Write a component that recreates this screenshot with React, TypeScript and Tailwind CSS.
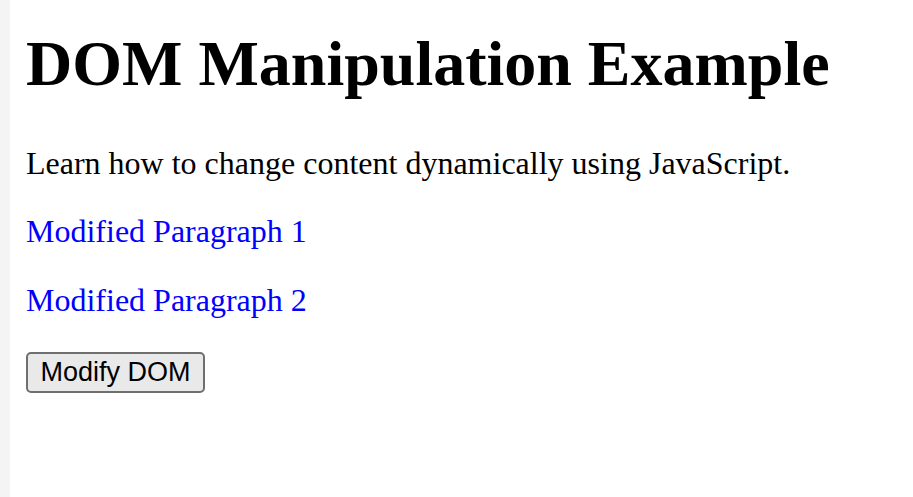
import React, { useState } from 'react';

export default function App() {
  const [modified] = useState(true);

  return (
    <div className="flex min-h-screen bg-white" style={{ fontFamily: '"Liberation Serif", "Times New Roman", serif' }}>
      <div className="w-[10px] shrink-0 bg-[#f4f4f4]" />
      <main className="flex-1 pl-[16px] pt-[27px]">
        <h1 className="mb-[44px] text-[64px] font-bold leading-[1.15] text-black">DOM Manipulation Example</h1>
        <p className="mb-[32px] text-[32px] leading-[1.15] text-black">
          Learn how to change content dynamically using JavaScript.
        </p>
        <p className="mb-[32px] text-[32px] leading-[1.15] text-[#0000ff]">
          {modified ? 'Modified Paragraph 1' : 'Paragraph 1'}
        </p>
        <p className="mb-[33px] text-[32px] leading-[1.15] text-[#0000ff]">
          {modified ? 'Modified Paragraph 2' : 'Paragraph 2'}
        </p>
        <button
          className="flex h-[41px] w-[179px] items-center justify-center rounded-[5px] border-2 border-[#6f6f6f] bg-[#e9e9e9] text-[27px] text-black"
          style={{ fontFamily: '"Liberation Sans", Arial, sans-serif' }}
        >
          Modify DOM
        </button>
      </main>
    </div>
  );
}
